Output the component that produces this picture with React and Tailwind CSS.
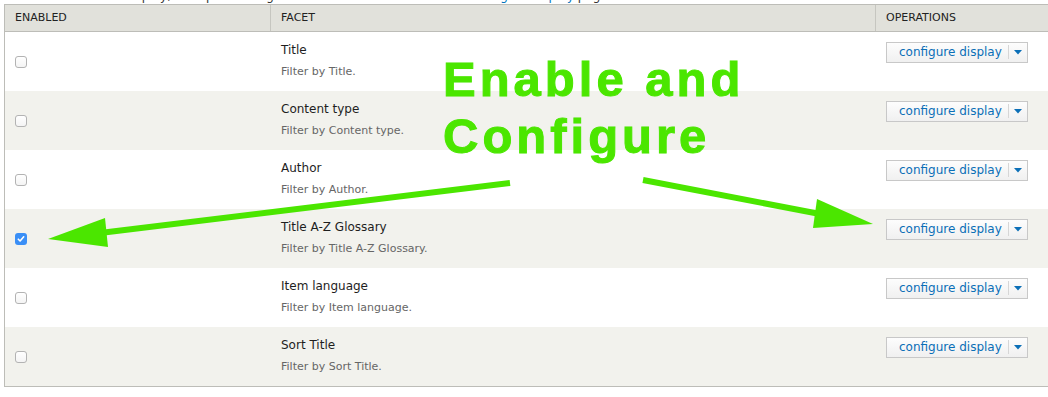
import React from "react";

const facets = [
  { name: "Title", enabled: false },
  { name: "Content type", enabled: false },
  { name: "Author", enabled: false },
  { name: "Title A-Z Glossary", enabled: true },
  { name: "Item language", enabled: false },
  { name: "Sort Title", enabled: false },
];

const Checkbox = ({ checked }) =>
  checked ? (
    <span className="flex h-[12px] w-[12px] items-center justify-center rounded-[3px] bg-[#3a8ff6]">
      <svg width="8" height="8" viewBox="0 0 8 8">
        <path d="M1.3 4.2 L3.1 6 L6.7 1.8" fill="none" stroke="#fff" strokeWidth="1.6" strokeLinecap="round" strokeLinejoin="round" />
      </svg>
    </span>
  ) : (
    <span className="block h-[12px] w-[12px] rounded-[3px] border border-[#b3b3b3] bg-gradient-to-b from-white to-[#f4f4f4]" />
  );

const ConfigureButton = () => (
  <div className="inline-flex h-[21px] items-center border border-[#c8c8c8] bg-gradient-to-b from-[#fdfdfd] to-[#f0f0f0]">
    <span className="pl-[12px] pr-[6px] text-[12px] leading-none text-[#0b6fb7]">configure display</span>
    <span className="h-[14px] border-l border-[#d6d6d6]" />
    <span className="flex w-[18px] items-center justify-center">
      <svg width="8" height="5" viewBox="0 0 8 5">
        <path d="M0 0 H8 L4 4.5 Z" fill="#0b6fb7" />
      </svg>
    </span>
  </div>
);

export default function App() {
  return (
    <div className="relative h-[397px] w-[1048px] overflow-hidden bg-white font-['DejaVu_Sans',sans-serif] text-[#222]">
      {/* clipped intro line above the table */}
      <div className="h-[4px] overflow-hidden">
        <p className="-mt-[11px] pl-[4px] text-[12px] leading-[14px] text-[#333]">
          Select the facets to display, then pick a widget for each enabled facet on the <span className="text-[#0074bd]">configure display</span> page.
        </p>
      </div>

      <div className="ml-[4px] w-[1060px] border-l border-[#bdbdb8]">
        {/* header */}
        <div className="grid h-[28px] grid-cols-[266px_605px_1fr] border-y border-[#bdbdb8] bg-[#e1e1db] text-[11px] uppercase text-[#222]">
          <div className="flex items-center border-r border-[#c6c6c0] pl-[10px]">Enabled</div>
          <div className="flex items-center border-r border-[#c6c6c0] pl-[10px]">Facet</div>
          <div className="flex items-center pl-[10px]">Operations</div>
        </div>

        {/* rows */}
        <div className="border-b border-[#bdbdb8]">
          {facets.map((f, i) => (
            <div
              key={f.name}
              className={`grid h-[59px] grid-cols-[266px_605px_1fr] ${i % 2 ? "bg-[#f2f2ed]" : "bg-white"}`}
            >
              <div className="flex items-center pl-[10px]">
                <Checkbox checked={f.enabled} />
              </div>
              <div className="pl-[10px] pt-[9px]">
                <div className="text-[12px] leading-[18px] text-[#1e1e1e]">{f.name}</div>
                <div className="mt-[5px] text-[11px] leading-[16px] text-[#666]">Filter by {f.name}.</div>
              </div>
              <div className="pl-[10px] pt-[7px]">
                <ConfigureButton />
              </div>
            </div>
          ))}
        </div>
      </div>

      {/* green annotation */}
      <div className="absolute left-[443px] top-[51px] font-['Liberation_Sans',Arial,sans-serif] text-[49px] font-bold leading-[57px] tracking-[4px] text-[#4be600] [-webkit-text-stroke:1px_#4be600]">
        <div>Enable and</div>
        <div>Configure</div>
      </div>
      <svg className="pointer-events-none absolute left-0 top-0" width="1048" height="397">
        <line x1="510" y1="183" x2="100" y2="233" stroke="#4be600" strokeWidth="6" />
        <polygon points="48,239 105,218 108,247" fill="#4be600" />
        <line x1="643" y1="180" x2="820" y2="214" stroke="#4be600" strokeWidth="6" />
        <polygon points="873,224 817,199 813,228" fill="#4be600" />
      </svg>
    </div>
  );
}
